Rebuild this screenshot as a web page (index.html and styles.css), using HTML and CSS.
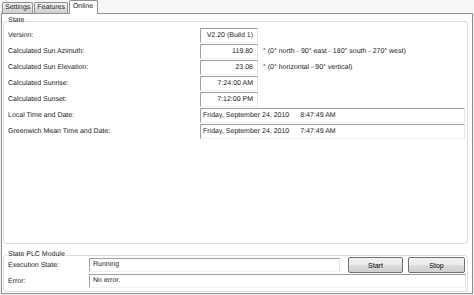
FILE: index.html
```html
<!DOCTYPE html>
<html lang="en">
<head>
  <meta charset="UTF-8" />
  <title>Online</title>
  <link rel="stylesheet" href="styles.css">
</head>
<body>
  <div class="tabs">
    <div class="tab">Settings</div>
    <div class="tab">Features</div>
    <div class="tab active">Online</div>
  </div>
  <div class="page">
    <fieldset class="group state">
      <legend>State</legend>
      <div class="row">
        <span class="label">Version:</span>
        <div class="box short">V2.20 (Build 1)</div>
      </div>
      <div class="row">
        <span class="label">Calculated Sun Azimuth:</span>
        <div class="box short">119.80</div>
        <span class="unit">° (0° north - 90° east - 180° south - 270° west)</span>
      </div>
      <div class="row">
        <span class="label">Calculated Sun Elevation:</span>
        <div class="box short">23.08</div>
        <span class="unit">° (0° horizontal - 90° vertical)</span>
      </div>
      <div class="row">
        <span class="label">Calculated Sunrise:</span>
        <div class="box short">7:24:00 AM</div>
      </div>
      <div class="row">
        <span class="label">Calculated Sunset:</span>
        <div class="box short">7:12:00 PM</div>
      </div>
      <div class="row">
        <span class="label">Local Time and Date:</span>
        <div class="box wide"><span class="date">Friday, September 24, 2010</span>8:47:49 AM</div>
      </div>
      <div class="row">
        <span class="label">Greenwich Mean Time and Date:</span>
        <div class="box wide"><span class="date">Friday, September 24, 2010</span>7:47:49 AM</div>
      </div>
    </fieldset>

    <fieldset class="group plc">
      <legend>State PLC Module</legend>
      <div class="prow first">
        <span class="plabel">Execution State:</span>
        <div class="box fill">Running</div>
        <button class="btn start">Start</button>
        <button class="btn stop">Stop</button>
      </div>
      <div class="prow">
        <span class="plabel">Error:</span>
        <div class="box fill err">No error.</div>
      </div>
    </fieldset>
  </div>
</body>
</html>
```

FILE: styles.css
```css
body {
  margin: 0;
  width: 474px;
  height: 295px;
  background: #f0f0f0;
  font-family: "Liberation Sans", Arial, sans-serif;
  font-size: 7px;
  text-rendering: geometricPrecision;
  color: #1a1a1a;
  overflow: hidden;
}

.tabs {
  display: flex;
  align-items: flex-end;
  height: 13px;
  padding-left: 2px;
  background: #f7f7f7;
}
.tab {
  box-sizing: border-box;
  height: 11px;
  line-height: 10px;
  padding: 0 2px;
  margin-right: 1px;
  border: 1px solid #8e8f8f;
  border-bottom: none;
  border-radius: 2px 2px 0 0;
  background: linear-gradient(#f2f2f2, #ebebeb 50%, #dddddd 50%, #cfcfcf);
}
.tab.active {
  height: 14px;
  line-height: 12px;
  margin-bottom: -1px;
  padding: 0 4px 0 3px;
  background: #fff;
  position: relative;
}

.page {
  box-sizing: border-box;
  display: flex;
  flex-direction: column;
  gap: 7px;
  height: 281px;
  width: 472px;
  margin-left: 1px;
  padding: 3px 1px 1px 1px;
  border: 1px solid #8e8f8f;
  background: #fff;
}

.group {
  margin: 0;
  border: 1px solid #d5dfe5;
  border-radius: 3px;
  padding: 3px 2px 2px 4px;
  width: 465px;
  box-sizing: border-box;
}
.group legend {
  padding: 0 1px;
  margin-left: -1px;
  line-height: 8px;
}
.state {
  flex: 1;
  display: flex;
  flex-direction: column;
  gap: 1px;
}
.plc {
  height: 41px;
  padding-top: 0;
}

.row {
  display: flex;
  align-items: center;
  height: 15px;
}
.label {
  width: 192px;
  flex: none;
}
.box {
  box-sizing: border-box;
  height: 15px;
  line-height: 13px;
  border-top: 1px solid #a0a0a0;
  border-left: 1px solid #a0a0a0;
  border-right: 1px solid #e3e3e3;
  border-bottom: 1px solid #f0f0f0;
  background: #fff;
  white-space: nowrap;
}
.short {
  width: 58px;
  text-align: right;
  padding-right: 4px;
}
.wide {
  flex: 1;
  padding-left: 2px;
}
.date {
  margin-right: 11px;
}
.unit {
  margin-left: 5px;
}

.prow {
  display: flex;
  align-items: center;
  height: 16px;
}
.prow.first {
  margin-top: -2px;
}
.plabel {
  width: 81px;
  flex: none;
}
.fill {
  flex: 1;
  height: 14px;
  line-height: 12px;
  padding-left: 3px;
}
.err {
  margin-right: -1px;
}
.btn {
  box-sizing: border-box;
  height: 16px;
  margin: 0;
  padding: 0;
  font-family: inherit;
  font-size: 7px;
  color: #000;
  border: 1px solid #707070;
  border-radius: 2px;
  background: linear-gradient(#f2f2f2, #ebebeb 50%, #dddddd 50%, #cfcfcf);
}
.start {
  width: 55px;
  margin-left: 8px;
}
.stop {
  width: 57px;
  margin-left: 5px;
}
```
